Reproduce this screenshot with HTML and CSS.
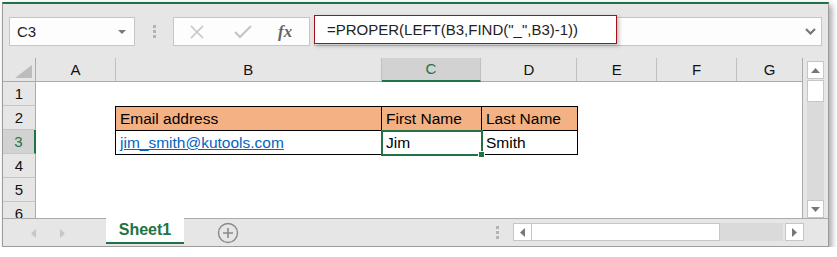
FILE: index.html
```html
<!DOCTYPE html>
<html lang="en">
<head>
    <meta charset="UTF-8">
    <title>Sheet1 - Excel</title>
    <link rel="stylesheet" href="styles.css">
</head>
<body>
    <div class="window">
        <!-- barra de fórmulas -->
        <div class="toolbar">
            <div class="name-box">
                <span>C3</span>
                <svg class="name-arrow" width="8" height="5" viewBox="0 0 8 5"><path d="M0 0 H8 L4 4 Z" fill="#7a7a7a"/></svg>
            </div>
            <svg class="grip" width="3" height="13" viewBox="0 0 3 13">
                <rect x="0" y="0" width="3" height="3" fill="#b4b4b4"/>
                <rect x="0" y="5" width="3" height="3" fill="#b4b4b4"/>
                <rect x="0" y="10" width="3" height="3" fill="#b4b4b4"/>
            </svg>
            <div class="fx-buttons">
                <svg width="16" height="16" viewBox="0 0 16 16"><path d="M2 2 L14 14 M14 2 L2 14" stroke="#c4c4c4" stroke-width="1.6"/></svg>
                <svg width="18" height="14" viewBox="0 0 18 14"><path d="M1 7 L6 12 L17 1" stroke="#c4c4c4" stroke-width="2" fill="none"/></svg>
                <span class="fx">fx</span>
            </div>
            <div class="formula-bar">
                <div class="formula-mark">=PROPER(LEFT(B3,FIND("_",B3)-1))</div>
                <svg class="chevron" width="11" height="7" viewBox="0 0 11 7"><path d="M1 1 L5.5 5.5 L10 1" stroke="#777" stroke-width="2.2" fill="none"/></svg>
            </div>
        </div>

        <!-- planilha -->
        <div class="sheet-area">
            <div class="sheet">
                <div class="col-heads">
                    <div class="corner"><svg width="17" height="13" viewBox="0 0 17 13"><path d="M17 0 V13 H0 Z" fill="#bcbcbc"/></svg></div>
                    <div class="ch" style="width: 80px">A</div>
                    <div class="ch" style="width: 266px">B</div>
                    <div class="ch active" style="width: 100px">C</div>
                    <div class="ch" style="width: 96px">D</div>
                    <div class="ch" style="width: 80px">E</div>
                    <div class="ch" style="width: 80px">F</div>
                    <div class="ch last" style="width: 65px">G</div>
                </div>
                <div class="sheet-body">
                    <div class="row-heads">
                        <div class="rh">1</div>
                        <div class="rh">2</div>
                        <div class="rh active">3</div>
                        <div class="rh">4</div>
                        <div class="rh">5</div>
                        <div class="rh">6</div>
                    </div>
                    <div class="cells">
                        <table class="data">
                            <tr>
                                <td class="head col-b">Email address</td>
                                <td class="head col-c">First Name</td>
                                <td class="head col-d">Last Name</td>
                            </tr>
                            <tr>
                                <td><a href="#" class="link">jim_smith@kutools.com</a></td>
                                <td class="sel">Jim<span class="handle"></span></td>
                                <td>Smith</td>
                            </tr>
                        </table>
                    </div>
                </div>
            </div>
            <div class="vscroll">
                <div class="sbtn"><svg width="9" height="5" viewBox="0 0 9 5"><path d="M0 5 L4.5 0 L9 5 Z" fill="#777"/></svg></div>
                <div class="vthumb"></div>
                <div class="vtrack"></div>
                <div class="sbtn"><svg width="9" height="5" viewBox="0 0 9 5"><path d="M0 0 L4.5 5 L9 0 Z" fill="#777"/></svg></div>
            </div>
        </div>

        <!-- abas -->
        <div class="tabbar">
            <div class="nav">
                <svg width="5" height="9" viewBox="0 0 5 9"><path d="M5 0 V9 L0 4.5 Z" fill="#c6c6c6"/></svg>
                <svg width="5" height="9" viewBox="0 0 5 9"><path d="M0 0 V9 L5 4.5 Z" fill="#c6c6c6"/></svg>
            </div>
            <div class="tab">Sheet1</div>
            <svg class="add" width="22" height="22" viewBox="0 0 22 22">
                <circle cx="11" cy="11" r="9.5" fill="none" stroke="#8a8a8a" stroke-width="1.4"/>
                <path d="M11 6 V16 M6 11 H16" stroke="#8a8a8a" stroke-width="1.6"/>
            </svg>
            <svg class="grip h-grip" width="3" height="13" viewBox="0 0 3 13">
                <rect x="0" y="0" width="3" height="3" fill="#b4b4b4"/>
                <rect x="0" y="5" width="3" height="3" fill="#b4b4b4"/>
                <rect x="0" y="10" width="3" height="3" fill="#b4b4b4"/>
            </svg>
            <div class="hscroll">
                <div class="sbtn h"><svg width="5" height="9" viewBox="0 0 5 9"><path d="M5 0 V9 L0 4.5 Z" fill="#777"/></svg></div>
                <div class="hthumb"></div>
                <div class="htrack"></div>
                <div class="sbtn h"><svg width="5" height="9" viewBox="0 0 5 9"><path d="M0 0 V9 L5 4.5 Z" fill="#777"/></svg></div>
            </div>
        </div>
    </div>
</body>
</html>
```

FILE: styles.css
```css
body {
    margin: 0;
    padding: 2px 0 0 2px;
    background-color: #ffffff;
    font-family: "Liberation Sans", Arial, sans-serif;
}
.window {
    box-sizing: border-box;
    width: 827px;
    height: 245px;
    background-color: #e6e6e6;
    border-top: 2px solid #217346;
    border-left: 1px solid #9c9c9c;
    border-right: 1px solid #9c9c9c;
    border-bottom: 1px solid #9c9c9c;
    box-shadow: 3px 3px 6px rgba(0, 0, 0, 0.35);
    overflow: hidden;
}

/* barra de fórmulas */
.toolbar {
    height: 54px;
    display: flex;
    align-items: flex-start;
    padding-top: 13px;
    box-sizing: border-box;
}
.name-box {
    box-sizing: border-box;
    width: 126px;
    height: 29px;
    margin-left: 6px;
    background-color: #fdfdfd;
    border: 1px solid #c6c6c6;
    display: flex;
    align-items: center;
    justify-content: space-between;
    padding: 0 8px 0 7px;
    font-size: 15px;
    color: #222;
}
.name-arrow {
    margin-top: 1px;
}
.grip {
    margin: 8px 0 0 18px;
}
.fx-buttons {
    box-sizing: border-box;
    width: 137px;
    height: 29px;
    margin-left: 17px;
    background-color: #fdfdfd;
    border: 1px solid #c6c6c6;
    display: flex;
    align-items: center;
    padding-left: 15px;
    gap: 29px;
}
.fx {
    font-family: "Liberation Serif", serif;
    font-style: italic;
    font-weight: bold;
    font-size: 17px;
    color: #666;
    margin-left: -3px;
}
.formula-bar {
    position: relative;
    box-sizing: border-box;
    width: 508px;
    height: 29px;
    margin-left: 4px;
    background-color: #fdfdfd;
    border: 1px solid #c6c6c6;
}
.formula-mark {
    position: absolute;
    left: -1px;
    top: -3px;
    box-sizing: border-box;
    width: 303px;
    height: 29px;
    border: 1px solid #a50f1b;
    background-color: #ffffff;
    box-shadow: 2px 2px 4px rgba(0, 0, 0, 0.25);
    font-size: 15px;
    line-height: 27px;
    padding-left: 12px;
    color: #222;
    white-space: nowrap;
}
.chevron {
    position: absolute;
    right: 5px;
    top: 10px;
}

/* planilha */
.sheet-area {
    display: flex;
    height: 160px;
}
.sheet {
    box-sizing: border-box;
    width: 800px;
    height: 160px;
    border-right: 1px solid #ababab;
    background-color: #ffffff;
    overflow: hidden;
}
.col-heads {
    display: flex;
    height: 24px;
    background-color: #e6e6e6;
    border-bottom: 1px solid #ababab;
    box-sizing: border-box;
}
.corner {
    width: 33px;
    box-sizing: border-box;
    border-right: 1px solid #ababab;
    display: flex;
    align-items: flex-end;
    justify-content: flex-end;
    padding: 0 3px 3px 0;
}
.ch {
    box-sizing: border-box;
    border-right: 1px solid #c0c0c0;
    text-align: center;
    font-size: 15px;
    line-height: 23px;
    color: #111;
}
.ch.active {
    background-color: #d2d2d2;
    border-bottom: 2px solid #217346;
    color: #217346;
    line-height: 22px;
    height: 24px;
}
.ch.last {
    border-right: none;
}
.sheet-body {
    display: flex;
}
.row-heads {
    width: 33px;
    flex-shrink: 0;
}
.rh {
    box-sizing: border-box;
    height: 24px;
    background-color: #e6e6e6;
    border-right: 1px solid #ababab;
    border-bottom: 1px solid #c6c6c6;
    text-align: center;
    font-size: 15px;
    line-height: 23px;
    color: #111;
}
.rh.active {
    background-color: #d2d2d2;
    border-right: 2px solid #217346;
    color: #217346;
}
.cells {
    flex: 1;
    padding: 24px 0 0 79px;
}
.data {
    border-collapse: collapse;
    font-size: 15.5px;
    color: #000;
}
.data td {
    border: 1px solid #000;
    height: 24px;
    padding: 1px 0 0 4px;
    line-height: 22px;
    box-sizing: border-box;
    white-space: nowrap;
}
.data td.head {
    background-color: #f4b183;
}
.col-b {
    width: 266px;
}
.col-c {
    width: 100px;
}
.col-d {
    width: 96px;
}
.link {
    color: #0563c1;
    text-decoration: underline;
}
.data td.sel {
    position: relative;
    outline: 2px solid #217346;
    outline-offset: -1px;
}
.handle {
    position: absolute;
    right: -4px;
    bottom: -4px;
    width: 5px;
    height: 5px;
    background-color: #217346;
    border: 1px solid #ffffff;
}

/* barras de rolagem */
.vscroll {
    width: 17px;
    margin-left: 4px;
    padding-top: 3px;
    display: flex;
    flex-direction: column;
}
.sbtn {
    box-sizing: border-box;
    width: 17px;
    height: 18px;
    background-color: #ffffff;
    border: 1px solid #c6c6c6;
    display: flex;
    align-items: center;
    justify-content: center;
}
.vthumb {
    box-sizing: border-box;
    height: 22px;
    margin-top: 1px;
    background-color: #ffffff;
    border: 1px solid #c6c6c6;
}
.vtrack {
    flex: 1;
    background-color: #dadada;
}

/* abas */
.tabbar {
    display: flex;
    align-items: flex-start;
    height: 28px;
    border-top: 1px solid #ababab;
}
.nav {
    width: 103px;
    display: flex;
    align-items: center;
    height: 28px;
    padding-left: 28px;
    gap: 24px;
    box-sizing: border-box;
}
.tab {
    box-sizing: border-box;
    width: 78px;
    height: 26px;
    margin-top: -1px;
    background-color: #ffffff;
    border-bottom: 2px solid #217346;
    color: #217346;
    font-weight: bold;
    font-size: 16px;
    line-height: 23px;
    text-align: center;
}
.add {
    margin: 3px 0 0 33px;
}
.h-grip {
    margin: 7px 0 0 257px;
}
.hscroll {
    display: flex;
    margin: 4px 0 0 14px;
    height: 18px;
    width: 291px;
}
.sbtn.h {
    width: 19px;
    height: 18px;
}
.hthumb {
    box-sizing: border-box;
    width: 188px;
    background-color: #ffffff;
    border: 1px solid #c6c6c6;
    border-left: none;
}
.htrack {
    flex: 1;
    background-color: #dadada;
    margin-right: 2px;
}
```
